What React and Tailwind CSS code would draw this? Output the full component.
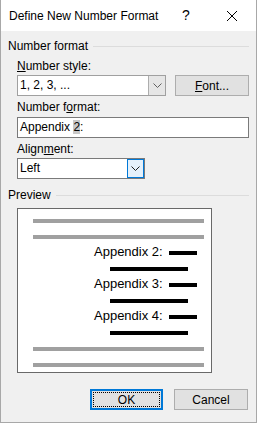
import React from "react";

function Chevron({ color = "#404040" }) {
  return (
    <svg width="9" height="5" viewBox="0 0 9 5" fill="none">
      <path d="M0.5 0.5 L4.5 4.5 L8.5 0.5" stroke={color} strokeWidth="1" />
    </svg>
  );
}

function Label({ children, className = "" }) {
  return <div className={`h-[16px] leading-[16px] pl-[16px] ${className}`}>{children}</div>;
}

function GroupHeader({ title, className = "" }) {
  return (
    <div className={`h-[16px] flex items-center pl-[7px] ${className}`}>
      <span className="leading-[16px]">{title}</span>
      <div className="flex-1 h-px bg-[#dcdcdc] ml-[5px]" />
    </div>
  );
}

function PreviewRow({ n }) {
  return (
    <>
      <div className="h-[16px] mt-[5px] flex items-center pl-[76px] text-[13px] text-black">
        <span className="leading-[16px]">Appendix {n}:</span>
        <div className="ml-[6px] mt-[2px] w-[28px] h-[4px] bg-black" />
      </div>
      <div className="mt-[7px] ml-[92px] w-[78px] h-[4px] bg-black" />
    </>
  );
}

export default function App() {
  return (
    <div className="w-[257px] h-[423px] bg-[#f0f0f0] font-['Liberation_Sans',Arial,sans-serif] text-[12px] text-black flex flex-col border-x border-b border-[#a8a8a8] overflow-hidden">
      <div className="h-[31px] bg-white flex items-center shrink-0">
        <span className="pl-[8px] flex-1 leading-[16px] whitespace-nowrap">Define New Number Format</span>
        <div className="w-[46px] h-full flex items-center justify-center text-[14px]">?</div>
        <div className="w-[46px] h-full flex items-center justify-center mr-[1px]">
          <svg width="10" height="10" viewBox="0 0 10 10">
            <path d="M0 0 L10 10 M10 0 L0 10" stroke="#000" strokeWidth="1" />
          </svg>
        </div>
      </div>

      <div className="flex flex-col pr-[7px]">
        <GroupHeader title="Number format" className="mt-[7px]" />

        <Label className="mt-[4px]">
          <u>N</u>umber style:
        </Label>
        <div className="mt-[1px] pl-[16px] flex items-center">
          <div className="w-[149px] h-[21px] flex border border-[#a0a0a0] bg-white">
            <div className="flex-1 pl-[2px] leading-[19px]">1, 2, 3, ...</div>
            <div className="w-[17px] h-full bg-[#e6e6e6] border-l border-[#adadad] flex items-center justify-center">
              <Chevron color="#606060" />
            </div>
          </div>
          <div className="ml-[9px] w-[74px] h-[21px] bg-[#e1e1e1] border border-[#adadad] flex items-center justify-center">
            <span>
              <u>F</u>ont...
            </span>
          </div>
        </div>

        <Label className="mt-[3px]">
          Number f<u>o</u>rmat:
        </Label>
        <div className="mt-[2px] pl-[16px]">
          <div className="h-[21px] border border-[#7a7a7a] bg-white pl-[2px] leading-[19px]">
            Appendix <span className="bg-[#c8c8c8]">2</span>:
          </div>
        </div>

        <Label className="mt-[3px]">
          Align<u>m</u>ent:
        </Label>
        <div className="mt-[1px] pl-[16px]">
          <div className="w-[128px] h-[21px] flex border border-[#7a7a7a] bg-white">
            <div className="flex-1 pl-[2px] leading-[19px]">Left</div>
            <div className="w-[17px] h-full bg-[#e5f1fb] border border-[#0078d7] flex items-center justify-center">
              <Chevron color="#202020" />
            </div>
          </div>
        </div>

        <GroupHeader title="Preview" className="mt-[8px]" />

        <div className="mt-[5px] ml-[16px] w-[195px] h-[165px] bg-white border border-[#696969] flex flex-col">
          <div className="mt-[10px] ml-[15px] w-[171px] h-[4px] bg-[#a0a0a0]" />
          <div className="mt-[12px] ml-[15px] w-[171px] h-[4px] bg-[#a0a0a0]" />
          <PreviewRow n={2} />
          <PreviewRow n={3} />
          <PreviewRow n={4} />
          <div className="mt-[12px] ml-[15px] w-[171px] h-[4px] bg-[#a0a0a0]" />
          <div className="mt-[12px] ml-[15px] w-[171px] h-[4px] bg-[#a0a0a0]" />
        </div>

        <div className="mt-[16px] flex justify-end gap-[11px] pr-[1px]">
          <div className="w-[73px] h-[21px] bg-[#e1e1e1] border-2 border-[#0078d7] p-[1px]">
            <div className="w-full h-full border border-dotted border-black flex items-center justify-center leading-none">
              OK
            </div>
          </div>
          <div className="w-[74px] h-[21px] bg-[#e1e1e1] border border-[#adadad] flex items-center justify-center">
            Cancel
          </div>
        </div>
      </div>
    </div>
  );
}
